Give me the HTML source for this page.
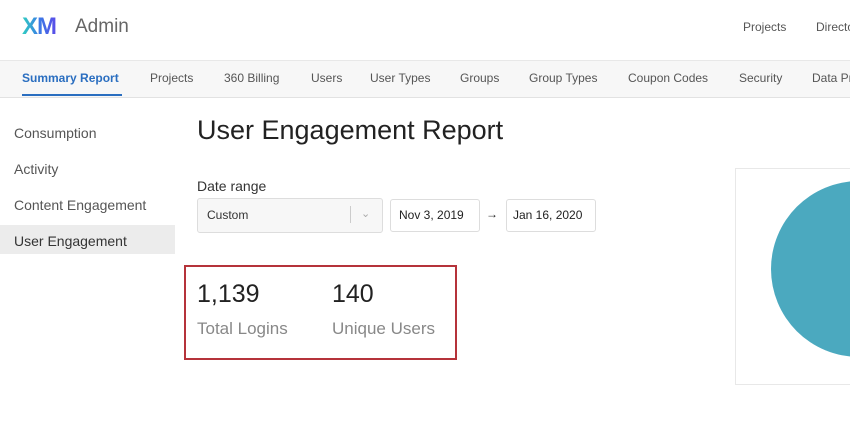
<!DOCTYPE html>
<html><head><style>
body{margin:0;width:850px;height:425px;overflow:hidden;background:#fff;font-family:"Liberation Sans",sans-serif;position:relative}
.a{position:absolute;white-space:nowrap}
</style></head><body>
<div class="a" style="left:22px;top:13px;font-size:24px;font-weight:bold;letter-spacing:-1px;background:linear-gradient(90deg,#2fd0c0,#3a7be6,#5a4ce8);-webkit-background-clip:text;color:transparent">XM</div>
<div class="a" style="left:75px;top:16px;font-size:19px;color:#666">Admin</div>
<div class="a" style="left:743px;top:20px;font-size:12px;color:#555">Projects</div>
<div class="a" style="left:816px;top:20px;font-size:12px;color:#555">Directo</div>
<div class="a" style="left:0;top:60px;width:850px;height:36px;background:#f7f7f7;border-top:1px solid #e8e8e8;border-bottom:1px solid #e2e2e2"></div>
<div class="a" style="left:22px;top:71px;font-size:12px;color:#2a6ec0;font-weight:bold">Summary Report</div>
<div class="a" style="left:22px;top:94px;width:100px;height:2px;background:#2a6ec0"></div>
<div class="a" style="left:150px;top:71px;font-size:12px;color:#555">Projects</div>
<div class="a" style="left:224px;top:71px;font-size:12px;color:#555">360 Billing</div>
<div class="a" style="left:311px;top:71px;font-size:12px;color:#555">Users</div>
<div class="a" style="left:370px;top:71px;font-size:12px;color:#555">User Types</div>
<div class="a" style="left:460px;top:71px;font-size:12px;color:#555">Groups</div>
<div class="a" style="left:529px;top:71px;font-size:12px;color:#555">Group Types</div>
<div class="a" style="left:628px;top:71px;font-size:12px;color:#555">Coupon Codes</div>
<div class="a" style="left:739px;top:71px;font-size:12px;color:#555">Security</div>
<div class="a" style="left:812px;top:71px;font-size:12px;color:#555">Data Pr</div>
<div class="a" style="left:14px;top:125px;font-size:14px;color:#555">Consumption</div>
<div class="a" style="left:14px;top:161px;font-size:14px;color:#555">Activity</div>
<div class="a" style="left:14px;top:197px;font-size:14px;color:#555">Content Engagement</div>
<div class="a" style="left:0;top:225px;width:175px;height:29px;background:#ececec"></div>
<div class="a" style="left:14px;top:233px;font-size:14px;color:#333">User Engagement</div>
<div class="a" style="left:197px;top:115px;font-size:27px;color:#222">User Engagement Report</div>
<div class="a" style="left:197px;top:178px;font-size:14px;color:#333">Date range</div>
<div class="a" style="left:197px;top:198px;width:184px;height:33px;background:#f7f7f7;border:1px solid #ddd;border-radius:3px"></div>
<div class="a" style="left:207px;top:208px;font-size:12px;color:#333">Custom</div>
<div class="a" style="left:350px;top:206px;width:1px;height:17px;background:#ccc"></div>
<div class="a" style="left:361px;top:207px;font-size:11px;color:#aaa">&#8964;</div>
<div class="a" style="left:390px;top:199px;width:88px;height:31px;border:1px solid #ddd;border-radius:3px"></div>
<div class="a" style="left:399px;top:208px;font-size:12px;color:#222">Nov 3, 2019</div>
<div class="a" style="left:486px;top:207px;font-size:12px;color:#222">&#8594;</div>
<div class="a" style="left:506px;top:199px;width:88px;height:31px;border:1px solid #ddd;border-radius:3px"></div>
<div class="a" style="left:513px;top:208px;font-size:12px;color:#222">Jan 16, 2020</div>
<div class="a" style="left:184px;top:265px;width:269px;height:91px;border:2px solid #b5333a"></div>
<div class="a" style="left:197px;top:280px;font-size:25px;color:#222">1,139</div>
<div class="a" style="left:332px;top:280px;font-size:25px;color:#222">140</div>
<div class="a" style="left:197px;top:319px;font-size:17px;color:#888">Total Logins</div>
<div class="a" style="left:332px;top:319px;font-size:17px;color:#888">Unique Users</div>
<div class="a" style="left:735px;top:168px;width:130px;height:215px;border:1px solid #e8e8e8;overflow:hidden">
<div style="position:absolute;left:35px;top:12px;width:176px;height:176px;border-radius:50%;background:#4ba9bf"></div></div>
</body></html>
